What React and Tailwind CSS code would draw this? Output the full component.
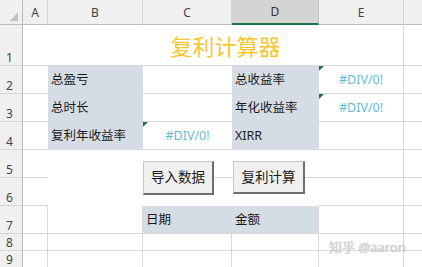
import React from 'react';

// Excel-like sheet: 复利计算器

const Corner = () => (
  <div className="relative bg-[#f0f0f0] border-r border-b border-[#bdbdbd]">
    <svg className="absolute right-[4px] bottom-[3px]" width="8" height="9" viewBox="0 0 8 9">
      <polygon points="8,0 8,9 0,9" fill="#c2c2c2" />
    </svg>
  </div>
);

const ColHead = ({ children }) => (
  <div className="flex items-end justify-center pb-[2px] bg-[#f0f0f0] border-r border-b border-r-[#d6d6d6] border-b-[#bdbdbd] text-[12px] text-[#444]">
    {children}
  </div>
);

const RowHead = ({ children }) => (
  <div className="flex items-end justify-center pr-[3px] bg-[#f0f0f0] border-r border-b border-r-[#bdbdbd] border-b-[#d6d6d6] text-[12px] leading-[14px] text-[#444]">
    {children}
  </div>
);

const ErrMark = () => (
  <svg className="absolute left-0 top-0" width="5" height="5" viewBox="0 0 5 5">
    <polygon points="0,0 5,0 0,5" fill="#217346" />
  </svg>
);

const Label = ({ children }) => (
  <div className="flex items-center pl-[3px] pt-[1px] bg-[#d6dce4] text-[12.5px] text-[#1a1a1a]">
    {children}
  </div>
);

export default function App() {
  return (
    <div className="relative w-[422px] h-[267px] overflow-hidden bg-white font-['Noto_Sans','Noto_Sans_CJK_SC',sans-serif]">
      <div className="grid grid-cols-[23px_25px_95px_89px_87px_85px_1fr] grid-rows-[25px_41px_28px_28px_28px_28px_28px_28px_17px_17px]">
        {/* column headers */}
        <Corner />
        <ColHead>A</ColHead>
        <ColHead>B</ColHead>
        <ColHead>C</ColHead>
        <div className="flex items-end justify-center pb-[2px] bg-[#d4d4d4] border-r border-r-[#c4c4c4] border-b-2 border-b-[#217346] text-[12px] text-[#333]">
          D
        </div>
        <ColHead>E</ColHead>
        <div className="bg-[#f0f0f0] border-b border-[#bdbdbd]" />

        {/* row 1 */}
        <RowHead>1</RowHead>
        <div className="border-b border-[#d9d9d9]" />
        <div className="col-span-4 flex items-center justify-center pt-[3px] border-b border-r border-[#d9d9d9] text-[22px] text-[#f8c52e]">
          复利计算器
        </div>
        <div className="border-b border-[#d9d9d9]" />

        {/* row 2 */}
        <RowHead>2</RowHead>
        <div className="border-b border-[#d9d9d9]" />
        <Label>总盈亏</Label>
        <div className="border-b border-[#d9d9d9]" />
        <Label>总收益率</Label>
        <div className="relative flex items-center justify-center pt-[1px] border-b border-r border-[#d9d9d9] text-[12.5px] text-[#62bbdb]">
          <ErrMark />
          #DIV/0!
        </div>
        <div className="border-b border-[#d9d9d9]" />

        {/* row 3 */}
        <RowHead>3</RowHead>
        <div className="border-b border-[#d9d9d9]" />
        <Label>总时长</Label>
        <div className="border-b border-[#d9d9d9]" />
        <Label>年化收益率</Label>
        <div className="relative flex items-center justify-center pt-[1px] border-b border-r border-[#d9d9d9] text-[12.5px] text-[#62bbdb]">
          <ErrMark />
          #DIV/0!
        </div>
        <div className="border-b border-[#d9d9d9]" />

        {/* row 4 */}
        <RowHead>4</RowHead>
        <div className="border-b border-[#d9d9d9]" />
        <Label>复利年收益率</Label>
        <div className="relative flex items-center justify-center pt-[1px] border-b border-[#d9d9d9] text-[12.5px] text-[#62bbdb]">
          <ErrMark />
          #DIV/0!
        </div>
        <Label>XIRR</Label>
        <div className="border-b border-r border-[#d9d9d9]" />
        <div className="border-b border-[#d9d9d9]" />

        {/* row 5 */}
        <RowHead>5</RowHead>
        <div className="border-b border-[#d9d9d9]" />
        <div />
        <div className="border-b border-[#d9d9d9]" />
        <div className="border-b border-[#d9d9d9]" />
        <div className="border-b border-r border-[#d9d9d9]" />
        <div className="border-b border-[#d9d9d9]" />

        {/* row 6 */}
        <RowHead>6</RowHead>
        <div className="border-b border-[#d9d9d9]" />
        <div />
        <div />
        <div />
        <div className="border-b border-r border-[#d9d9d9]" />
        <div className="border-b border-[#d9d9d9]" />

        {/* row 7 */}
        <RowHead>7</RowHead>
        <div className="border-b border-r border-[#d9d9d9]" />
        <div className="border-b border-r border-[#d9d9d9]" />
        <div className="flex items-center pl-[3px] pt-[1px] bg-[#d6dce4] border-b border-[#d9d9d9] text-[12.5px] text-[#1a1a1a]">日期</div>
        <div className="flex items-center pl-[3px] pt-[1px] bg-[#d6dce4] border-b border-r border-[#d9d9d9] text-[12.5px] text-[#1a1a1a]">金额</div>
        <div className="border-b border-r border-[#d9d9d9]" />
        <div className="border-b border-[#d9d9d9]" />

        {/* rows 8-9 */}
        <RowHead>8</RowHead>
        <div className="border-b border-r border-[#d9d9d9]" />
        <div className="border-b border-r border-[#d9d9d9]" />
        <div className="border-b border-r border-[#d9d9d9]" />
        <div className="border-b border-r border-[#d9d9d9]" />
        <div className="border-b border-r border-[#d9d9d9]" />
        <div className="border-b border-[#d9d9d9]" />

        <RowHead>9</RowHead>
        <div className="border-b border-r border-[#d9d9d9]" />
        <div className="border-b border-r border-[#d9d9d9]" />
        <div className="border-b border-r border-[#d9d9d9]" />
        <div className="border-b border-r border-[#d9d9d9]" />
        <div className="border-b border-r border-[#d9d9d9]" />
        <div className="border-b border-[#d9d9d9]" />
      </div>

      {/* form buttons floating over the sheet */}
      <button className="absolute left-[143px] top-[161px] w-[71px] h-[34px] flex items-center justify-center bg-[#f0f0f0] border border-[#c8c8c8] border-r-2 border-b-2 border-r-[#6e6e6e] border-b-[#6e6e6e] text-[13.5px] text-[#1a1a1a]">
        导入数据
      </button>
      <button className="absolute left-[233px] top-[161px] w-[72px] h-[33px] flex items-center justify-center bg-[#f0f0f0] border border-[#c8c8c8] border-r-2 border-b-2 border-r-[#6e6e6e] border-b-[#6e6e6e] text-[13.5px] text-[#1a1a1a]">
        复利计算
      </button>

      {/* watermark */}
      <div className="absolute left-[329px] top-[239px] text-[13px] leading-[16px] text-[#dadada] [text-shadow:0_0_1px_#a0a0a0]">
        知乎 @aaron
      </div>
    </div>
  );
}
